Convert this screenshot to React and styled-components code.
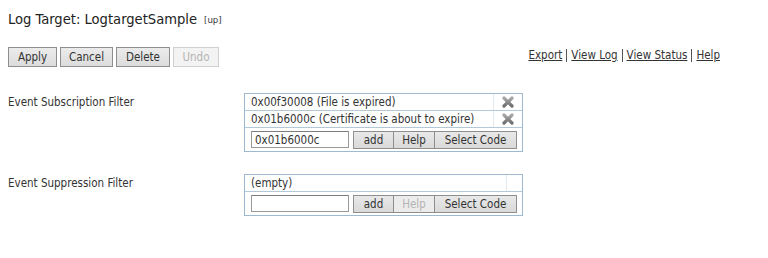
import React from 'react';
import styled, { createGlobalStyle } from 'styled-components';

const GlobalStyle = createGlobalStyle`
  html, body {
    margin: 0;
    padding: 0;
    background: #ffffff;
  }
  body {
    font-family: "DejaVu Sans Condensed", "DejaVu Sans", Tahoma, sans-serif;
    font-size: 11.5px;
    color: #333333;
  }
`;

const Page = styled.div`
  width: 712px;
  padding: 8px 0 0 8px;
`;

const Title = styled.h1`
  margin: 0;
  height: 20px;
  font-size: 14.6px;
  font-weight: normal;
  color: #222222;
  display: flex;
  align-items: center;
`;

const UpLink = styled.span`
  font-size: 9.5px;
  margin-left: 7px;
  margin-top: 3px;
  color: #333333;
`;

const Toolbar = styled.div`
  margin-top: 19px;
  display: flex;
  justify-content: space-between;
  align-items: center;
`;

const ButtonGroup = styled.div`
  display: flex;
  gap: 3px;
`;

const Button = styled.button`
  font-family: inherit;
  font-size: 11.5px;
  height: 20px;
  width: ${p => p.$w}px;
  padding: 0;
  border: 1px solid ${p => (p.disabled ? '#cfcfcf' : '#8e8e8e')};
  background: ${p => (p.disabled ? '#f3f3f3' : 'linear-gradient(#ebebeb, #dcdcdc)')};
  color: ${p => (p.disabled ? '#b4b4b4' : '#333333')};
`;

const Links = styled.div`
  display: flex;
  align-items: center;
  margin-top: -4px;
`;

const Link = styled.a`
  color: #333333;
  text-decoration: underline;
  cursor: pointer;
`;

const Sep = styled.span`
  display: inline-block;
  width: 1px;
  height: 13px;
  background: #555555;
  margin: 0 4px;
`;

const Section = styled.div`
  display: grid;
  grid-template-columns: 236px 279px;
  margin-top: ${p => p.$top}px;
`;

const Label = styled.div`
  padding-top: 2px;
  color: #333333;
`;

const FilterBox = styled.div`
  border: 1px solid #9fbad0;
  display: flex;
  flex-direction: column;
`;

const CodeRow = styled.div`
  display: flex;
  height: 16px;
  border-bottom: 1px solid #b3c9da;
`;

const CodeText = styled.div`
  flex: 1;
  padding-left: 6px;
  display: flex;
  align-items: center;
  color: #333333;
`;

const RemoveCell = styled.div`
  width: ${p => p.$w}px;
  border-left: 1px solid #dfe8ef;
  display: flex;
  align-items: center;
  justify-content: center;
`;

const InputRow = styled.div`
  display: flex;
  align-items: center;
  height: 23px;
  padding-left: 6px;
`;

const CodeInput = styled.input`
  box-sizing: border-box;
  width: 98px;
  height: 17px;
  padding: 0 3px;
  font-family: inherit;
  font-size: 11.5px;
  color: #333333;
  border: 1px solid #9a9a9a;
  border-top-color: #7d7d7d;
  outline: none;
  margin-right: 4px;
`;

const RowButton = styled(Button)`
  height: 18px;
  margin-left: -1px;
  &:first-of-type {
    margin-left: 0;
  }
  border-color: #8e8e8e;
  background: ${p => (p.disabled ? '#ececec' : 'linear-gradient(#e9e9e9, #d9d9d9)')};
`;

const XIcon = () => (
  <svg width="12" height="12" viewBox="0 0 12 12">
    <defs>
      <linearGradient id="xg" x1="0" y1="0" x2="0" y2="1">
        <stop offset="0" stopColor="#a8a8a8" />
        <stop offset="1" stopColor="#6f6f6f" />
      </linearGradient>
    </defs>
    <path d="M2 2 L10 10 M10 2 L2 10" stroke="url(#xg)" strokeWidth="3.2" strokeLinecap="round" />
  </svg>
);

const FilterSection = ({ top, label, codes, value, helpDisabled }) => (
  <Section $top={top}>
    <Label>{label}</Label>
    <FilterBox>
      {codes.length ? (
        codes.map(c => (
          <CodeRow key={c}>
            <CodeText>{c}</CodeText>
            <RemoveCell $w={28}>
              <XIcon />
            </RemoveCell>
          </CodeRow>
        ))
      ) : (
        <CodeRow>
          <CodeText>(empty)</CodeText>
          <RemoveCell $w={15} />
        </CodeRow>
      )}
      <InputRow>
        <CodeInput defaultValue={value} />
        <RowButton $w={41}>add</RowButton>
        <RowButton $w={42} disabled={helpDisabled}>Help</RowButton>
        <RowButton $w={83}>Select Code</RowButton>
      </InputRow>
    </FilterBox>
  </Section>
);

export default function App() {
  return (
    <Page>
      <GlobalStyle />
      <Title>
        Log Target: LogtargetSample <UpLink>[up]</UpLink>
      </Title>
      <Toolbar>
        <ButtonGroup>
          <Button $w={49}>Apply</Button>
          <Button $w={53}>Cancel</Button>
          <Button $w={54}>Delete</Button>
          <Button $w={46} disabled>Undo</Button>
        </ButtonGroup>
        <Links>
          <Link>Export</Link>
          <Sep />
          <Link>View Log</Link>
          <Sep />
          <Link>View Status</Link>
          <Sep />
          <Link>Help</Link>
        </Links>
      </Toolbar>
      <FilterSection
        top={26}
        label="Event Subscription Filter"
        codes={['0x00f30008 (File is expired)', '0x01b6000c (Certificate is about to expire)']}
        value="0x01b6000c"
      />
      <FilterSection top={22} label="Event Suppression Filter" codes={[]} value="" helpDisabled />
    </Page>
  );
}
